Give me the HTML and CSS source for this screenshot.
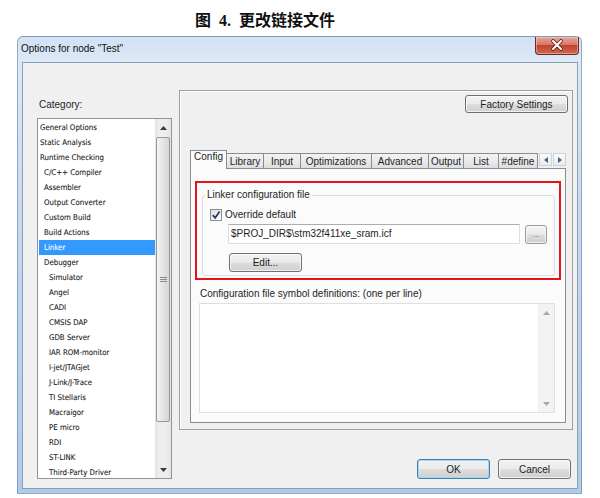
FILE: index.html
```html
<!DOCTYPE html>
<html lang="zh-CN">
<head>
    <meta charset="UTF-8">
    <meta name="viewport" content="width=device-width, initial-scale=1.0">
    <title>图 4. 更改链接文件</title>
    <link rel="stylesheet" href="styles.css">
</head>
<body>
    <div class="caption">图 4. 更改链接文件</div>

    <div class="window">
        <div class="titlebar">
            <span class="title">Options for node "Test"</span>
            <div class="close-btn">
                <svg width="44" height="18" viewBox="0 0 44 18">
                    <path d="M18 5 L26 13 M26 5 L18 13" stroke="#5b1c1c" stroke-width="3.6" stroke-linecap="round"/>
                    <path d="M18 5 L26 13 M26 5 L18 13" stroke="#ffffff" stroke-width="2" stroke-linecap="round"/>
                </svg>
            </div>
        </div>

        <div class="client">
            <!-- Category tree -->
            <div class="left-col">
                <div class="category-label">Category:</div>
                <div class="listbox">
                    <ul class="items">
                        <li class="lvl0">General Options</li>
                        <li class="lvl0">Static Analysis</li>
                        <li class="lvl0">Runtime Checking</li>
                        <li class="lvl1">C/C++ Compiler</li>
                        <li class="lvl1">Assembler</li>
                        <li class="lvl1">Output Converter</li>
                        <li class="lvl1">Custom Build</li>
                        <li class="lvl1">Build Actions</li>
                        <li class="lvl1 selected">Linker</li>
                        <li class="lvl1">Debugger</li>
                        <li class="lvl2">Simulator</li>
                        <li class="lvl2">Angel</li>
                        <li class="lvl2">CADI</li>
                        <li class="lvl2">CMSIS DAP</li>
                        <li class="lvl2">GDB Server</li>
                        <li class="lvl2">IAR ROM-monitor</li>
                        <li class="lvl2">I-jet/JTAGjet</li>
                        <li class="lvl2">J-Link/J-Trace</li>
                        <li class="lvl2">TI Stellaris</li>
                        <li class="lvl2">Macraigor</li>
                        <li class="lvl2">PE micro</li>
                        <li class="lvl2">RDI</li>
                        <li class="lvl2">ST-LINK</li>
                        <li class="lvl2">Third-Party Driver</li>
                    </ul>
                    <div class="vscroll">
                        <div class="sb-arrow">
                            <svg width="7" height="4" viewBox="0 0 7 4"><polygon points="0,4 3.5,0 7,4" fill="#3c3c3c"/></svg>
                        </div>
                        <div class="sb-track">
                            <div class="sb-thumb">
                                <svg width="7" height="5" viewBox="0 0 7 5">
                                    <path d="M0 0.5 H7 M0 2.5 H7 M0 4.5 H7" stroke="#8a8a8a" stroke-width="1"/>
                                </svg>
                            </div>
                        </div>
                        <div class="sb-arrow">
                            <svg width="7" height="4" viewBox="0 0 7 4"><polygon points="0,0 7,0 3.5,4" fill="#3c3c3c"/></svg>
                        </div>
                    </div>
                </div>
            </div>

            <!-- Options page -->
            <div class="right-col">
                <div class="panel">
                    <div class="panel-top">
                        <button class="btn factory">Factory Settings</button>
                    </div>
                    <div class="tabstrip">
                        <div class="tab active" style="width: 37px;">Config</div>
                        <div class="tab" style="width: 38px;">Library</div>
                        <div class="tab" style="width: 38px;">Input</div>
                        <div class="tab" style="width: 72px;">Optimizations</div>
                        <div class="tab" style="width: 58px;">Advanced</div>
                        <div class="tab" style="width: 36px;">Output</div>
                        <div class="tab" style="width: 36px;">List</div>
                        <div class="tab" style="width: 40px;">#define</div>
                        <div class="tab-scroll">
                            <span class="ts-btn"><svg width="4" height="6" viewBox="0 0 4 6"><polygon points="4,0 0,3 4,6" fill="#4a6290"/></svg></span>
                            <span class="ts-btn"><svg width="4" height="6" viewBox="0 0 4 6"><polygon points="0,0 4,3 0,6" fill="#4a6290"/></svg></span>
                        </div>
                    </div>
                    <div class="tabpage">
                        <div class="highlight">
                            <fieldset class="group">
                                <legend>Linker configuration file</legend>
                                <div class="check-row">
                                    <span class="checkbox">
                                        <svg width="10" height="10" viewBox="0 0 10 10"><path d="M1.8 5.2 L4.2 7.8 L8.6 1.6" fill="none" stroke="#23366e" stroke-width="1.7"/></svg>
                                    </span>
                                    <span>Override default</span>
                                </div>
                                <div class="path-row">
                                    <div class="textbox">$PROJ_DIR$\stm32f411xe_sram.icf</div>
                                    <button class="btn browse">...</button>
                                </div>
                                <button class="btn edit">Edit...</button>
                            </fieldset>
                        </div>
                        <div class="defs-label">Configuration file symbol definitions: (one per line)</div>
                        <div class="textarea">
                            <div class="ta-text"></div>
                            <div class="vscroll light">
                                <div class="sb-arrow">
                                    <svg width="7" height="4" viewBox="0 0 7 4"><polygon points="0,4 3.5,0 7,4" fill="#a8a8a8"/></svg>
                                </div>
                                <div class="sb-track"></div>
                                <div class="sb-arrow">
                                    <svg width="7" height="4" viewBox="0 0 7 4"><polygon points="0,0 7,0 3.5,4" fill="#a8a8a8"/></svg>
                                </div>
                            </div>
                        </div>
                    </div>
                </div>
                <div class="dialog-buttons">
                    <button class="btn default">OK</button>
                    <button class="btn">Cancel</button>
                </div>
            </div>
        </div>
    </div>
</body>
</html>
```

FILE: styles.css
```css
/* Global */
* {
    box-sizing: border-box;
    margin: 0;
    padding: 0;
}
body {
    width: 600px;
    height: 498px;
    background: #ffffff;
    font-family: "Liberation Sans", Arial, sans-serif;
    font-size: 10px;
    color: #1e1e1e;
    overflow: hidden;
}
.caption {
    height: 36px;
    padding: 12px 0 0 195px;
    font-family: "Liberation Serif", "Noto Sans CJK SC", serif;
    font-size: 16px;
    line-height: 18px;
    font-weight: bold;
    word-spacing: 4px;
    color: #111;
}

/* Window frame (Aero style) */
.window {
    margin-left: 17px;
    width: 565px;
    height: 458px;
    display: flex;
    flex-direction: column;
    border-radius: 6px 6px 0 0;
    border: 1px solid rgba(70, 100, 140, 0.45);
    background: linear-gradient(180deg, #d2e2f4 0%, #dbe8f6 5%, #c6daf0 40%, #b1cbea 100%);
}
.titlebar {
    height: 25px;
    display: flex;
    align-items: flex-start;
    padding-left: 3px;
}
.title {
    padding-top: 6px;
    line-height: 12px;
    font-size: 10px;
    color: #111;
}
.close-btn {
    margin-left: auto;
    margin-right: 2px;
    width: 44px;
    height: 18px;
    border: 1px solid #6b2a26;
    border-top: none;
    border-radius: 0 0 4px 4px;
    background: linear-gradient(180deg, #e8a493 0%, #d47a66 45%, #c2432d 50%, #cf6a4e 100%);
    box-shadow: inset 0 0 0 1px rgba(255, 220, 210, 0.45);
}
.close-btn svg {
    display: block;
    margin: -1px 0 0 -1px;
}

/* Client area */
.client {
    flex: 1;
    margin: 0 3px 4px 4px;
    display: flex;
    padding: 27px 4px 0 14px;
    background: #f0f0f0;
    border: 1px solid #8d9fb6;
}

/* Category list */
.left-col {
    width: 135px;
    margin-right: 7px;
    display: flex;
    flex-direction: column;
}
.category-label {
    height: 28px;
    display: flex;
    align-items: flex-end;
    padding: 0 0 7px 2px;
    line-height: 12px;
}
.listbox {
    height: 361px;
    display: flex;
    border: 1px solid #8f949c;
    background: #ffffff;
}
.items {
    flex: 1;
    list-style: none;
    padding-top: 1px;
    font-family: "DejaVu Sans Condensed", "Liberation Sans", sans-serif;
    font-size: 7.8px;
    color: #141414;
    -webkit-text-stroke: 0.08px #141414;
}
.items li {
    height: 15px;
    line-height: 15px;
    white-space: nowrap;
}
.items .lvl0 { padding-left: 2px; }
.items .lvl1 { padding-left: 6px; }
.items .lvl2 { padding-left: 11px; }
.items li.selected {
    background: #3399ff;
    color: #ffffff;
    -webkit-text-stroke: 0.08px #ffffff;
    margin-left: 1px;
    padding-left: 5px;
}

/* Scrollbars */
.vscroll {
    width: 16px;
    display: flex;
    flex-direction: column;
    background: linear-gradient(90deg, #e3e3e3, #eeeeee 30%, #eeeeee 70%, #e3e3e3);
}
.sb-arrow {
    height: 17px;
    display: flex;
    align-items: center;
    justify-content: center;
}
.sb-track {
    flex: 1;
    padding: 1px 1px 0 1px;
}
.sb-thumb {
    height: 285px;
    border: 1px solid #9a9a9a;
    border-radius: 2px;
    background: linear-gradient(90deg, #f4f4f4, #e4e4e4 50%, #d6d6d6);
    display: flex;
    align-items: center;
    justify-content: center;
}
.sb-thumb svg { display: block; }
.vscroll.light {
    background: #f3f3f3;
    border-left: 1px solid #f0f0f0;
}

/* Right side */
.right-col {
    flex: 1;
    display: flex;
    flex-direction: column;
}
.panel {
    height: 340px;
    display: flex;
    flex-direction: column;
    padding: 4px 4px 6px 10px;
    border: 1px solid #a0a0a0;
    box-shadow: inset 1px 1px 0 #ffffff;
}
.panel-top {
    height: 18px;
    display: flex;
    justify-content: flex-end;
}

/* Buttons */
.btn {
    font-family: "Liberation Sans", Arial, sans-serif;
    font-size: 10px;
    color: #1e1e1e;
    border: 1px solid #707070;
    border-radius: 3px;
    background: linear-gradient(180deg, #f2f2f2 0%, #ebebeb 48%, #dddddd 52%, #cfcfcf 100%);
    box-shadow: inset 0 0 0 1px rgba(255, 255, 255, 0.7);
    cursor: pointer;
}
.btn.factory {
    width: 103px;
    height: 18px;
}
.btn.browse {
    width: 22px;
    height: 19px;
    margin: 1px 0 0 5px;
    border-color: #9a9a9a;
    color: #666;
    font-size: 8px;
}
.btn.edit {
    display: block;
    width: 73px;
    height: 19px;
    margin: 9px 0 0 24px;
}
.btn.default {
    border-color: #3c7fb1;
    box-shadow: inset 0 0 0 1px #a9d7f2;
}

/* Tabs */
.tabstrip {
    height: 18px;
    margin: 37px 2px 0 0;
    display: flex;
    align-items: flex-end;
    position: relative;
    z-index: 1;
}
.tab {
    height: 15px;
    margin-right: -1px;
    display: flex;
    justify-content: center;
    line-height: 15px;
    white-space: nowrap;
    overflow: hidden;
    border: 1px solid #898c95;
    border-bottom: none;
    background: linear-gradient(180deg, #f3f3f3 0%, #ebebeb 50%, #dedede 100%);
}
.tab.active {
    height: 19px;
    margin-bottom: -1px;
    line-height: 12px;
    background: #fbfbfb;
    position: relative;
    z-index: 2;
}
.tab-scroll {
    margin: 0 0 2px auto;
    display: flex;
    gap: 1px;
}
.ts-btn {
    width: 13px;
    height: 13px;
    display: flex;
    align-items: center;
    justify-content: center;
    border: 1px solid #cfd3d8;
    background: linear-gradient(180deg, #fbfbfb, #ececec);
}

/* Tab page */
.tabpage {
    flex: 1;
    margin-right: 2px;
    border: 1px solid #898c95;
    background: #fbfbfb;
    display: flex;
    flex-direction: column;
}
.highlight {
    margin: 12px 4px 0 4px;
    padding: 6px 4px 2px 5px;
    border: 2px solid #e3141b;
}
.group {
    border: 1px solid #d5dfe5;
    border-radius: 3px;
    padding: 0 0 3px 2px;
}
.group legend {
    padding: 0 2px;
    line-height: 12px;
}
.check-row {
    margin: 7px 0 0 5px;
    height: 13px;
    display: flex;
    align-items: center;
    gap: 3px;
}
.checkbox {
    width: 12px;
    height: 12px;
    display: flex;
    align-items: center;
    justify-content: center;
    border: 1px solid #8f8f8f;
    background: linear-gradient(135deg, #dcdcdc, #ffffff);
}
.checkbox svg { display: block; }
.path-row {
    margin: 3px 0 0 23px;
    display: flex;
}
.textbox {
    width: 292px;
    height: 20px;
    padding-left: 2px;
    line-height: 18px;
    border: 1px solid #dbdfe6;
    border-top-color: #abadb3;
    background: #ffffff;
}
.defs-label {
    margin: 8px 0 0 9px;
    line-height: 12px;
}
.textarea {
    height: 110px;
    margin: 3px 10px 0 8px;
    display: flex;
    border: 1px solid #dcdfe3;
    background: #ffffff;
}
.ta-text { flex: 1; }

/* Dialog buttons */
.dialog-buttons {
    margin-top: 29px;
    padding-right: 2px;
    display: flex;
    justify-content: flex-end;
    gap: 8px;
}
.dialog-buttons .btn {
    width: 73px;
    height: 20px;
}
```
